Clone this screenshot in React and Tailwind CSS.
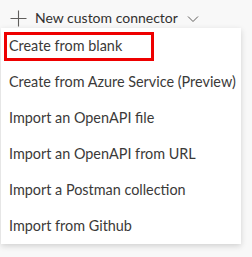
import React from 'react';

const items = [
  'Create from blank',
  'Create from Azure Service (Preview)',
  'Import an OpenAPI file',
  'Import an OpenAPI from URL',
  'Import a Postman collection',
  'Import from Github',
];

const App = () => {
  return (
    <div
      className="w-[252px] h-[257px] bg-[#f8f8f8] overflow-hidden"
      style={{ fontFamily: '"Segoe UI", Lato, sans-serif' }}
    >
      {/* Command bar button */}
      <div className="flex items-center h-[28px] pl-[10px] pt-[8px]">
        <svg width="17" height="17" viewBox="0 0 17 17" className="shrink-0">
          <path d="M8.5 0.5V16.5M0.5 8.5H16.5" stroke="#605e5c" strokeWidth="1.1" fill="none" />
        </svg>
        <span className="ml-[8px] text-[14px] text-[#323130] leading-none whitespace-nowrap">New custom connector</span>
        <svg width="12" height="8" viewBox="0 0 12 8" className="ml-[9px] mt-[2px]">
          <path d="M1 1.5L6 6.5L11 1.5" stroke="#605e5c" strokeWidth="1" fill="none" />
        </svg>
      </div>

      {/* Dropdown menu */}
      <div className="ml-[1px] w-[240px] bg-white shadow-[0_2px_6px_rgba(0,0,0,0.16)]">
        {items.map((label, i) => (
          <div key={label} className="h-[36px] flex items-center pl-[3px]">
            <div
              className={
                'h-[29px] flex items-center pl-[2px] text-[14.4px] text-[#3b3a39] whitespace-nowrap ' +
                (i === 0 ? 'border-[3px] border-[#ee0000] w-[150px]' : 'border-[3px] border-transparent')
              }
            >
              {label}
            </div>
          </div>
        ))}
      </div>
    </div>
  );
};

export default App;
